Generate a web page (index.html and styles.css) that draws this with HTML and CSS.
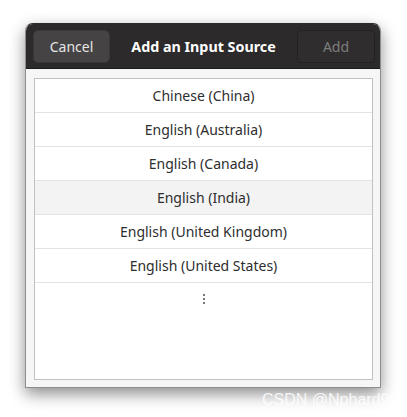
FILE: index.html
```html
<!DOCTYPE html>
<html>
<head>
<meta charset="utf-8">
<link rel="stylesheet" href="styles.css">
</head>
<body>
<div class="stage">
  <div class="dialog">
    <div class="header">
      <button class="btn btn-cancel">Cancel</button>
      <div class="title">Add an Input Source</div>
      <button class="btn btn-add">Add</button>
    </div>
    <div class="content">
      <div class="list">
        <div class="row">Chinese (China)</div>
        <div class="row">English (Australia)</div>
        <div class="row">English (Canada)</div>
        <div class="row row-hover">English (India)</div>
        <div class="row">English (United Kingdom)</div>
        <div class="row">English (United States)</div>
        <div class="row row-more">
          <svg width="4" height="12" viewBox="0 0 4 12" aria-hidden="true">
            <rect x="1" y="0" width="2" height="2" fill="#7a7a7a"/>
            <rect x="1" y="4" width="2" height="2" fill="#7a7a7a"/>
            <rect x="1" y="8" width="2" height="2" fill="#7a7a7a"/>
          </svg>
        </div>
      </div>
    </div>
  </div>
  <div class="watermark">CSDN @Nphard999</div>
</div>
</body>
</html>
```

FILE: styles.css
```css
html, body {
  margin: 0;
  padding: 0;
  background: #ffffff;
}
body {
  font-family: "Noto Sans", "DejaVu Sans", sans-serif;
  width: 407px;
  height: 417px;
  overflow: hidden;
}
.stage {
  position: relative;
  padding: 23px 0 0 25px;
}
.dialog {
  width: 354px;
  height: 363px;
  border: 1px solid #8e8e8e;
  border-top-color: #2c2a2b;
  border-radius: 8px 8px 0 0;
  background: #f6f6f6;
  box-shadow: 0 6px 16px rgba(0,0,0,0.45);
  display: flex;
  flex-direction: column;
  overflow: hidden;
}
.header {
  height: 44px;
  flex: none;
  background: #2c2a2b;
  border-bottom: 1px solid #1c1b1c;
  display: flex;
  align-items: center;
  justify-content: space-between;
  padding: 0 5px 0 7px;
}
.btn {
  font-family: "Noto Sans", "DejaVu Sans", sans-serif;
  font-size: 14px;
  height: 33px;
  width: 77px;
  border-radius: 5px;
  padding: 0;
  margin-top: 1px;
}
.btn-cancel {
  background: #454344;
  border: 1px solid #3a3839;
  color: #e6e6e6;
}
.btn-add {
  background: #2f2d2e;
  border: 1px solid #232223;
  color: #7d7d7d;
  width: 78px;
}
.title {
  color: #ffffff;
  font-weight: bold;
  font-size: 14.3px;
  margin-top: 1px;
}
.content {
  flex: 1;
  padding: 9px 7px 7px 8px;
  display: flex;
}
.list {
  flex: 1;
  background: #ffffff;
  border: 1px solid #c1c1c1;
}
.row {
  height: 33px;
  border-bottom: 1px solid #e3e3e3;
  display: flex;
  align-items: center;
  justify-content: center;
  font-size: 14px;
  color: #2e2e2e;
}
.row-hover {
  background: #f3f3f3;
}
.row-more {
  border-bottom: none;
  height: 34px;
  align-items: flex-start;
  padding-top: 11px;
  box-sizing: border-box;
}
.watermark {
  position: absolute;
  left: 262px;
  top: 391px;
  font-family: "Liberation Sans", Arial, sans-serif;
  font-size: 16px;
  color: rgba(255,255,255,0.85);
  white-space: nowrap;
}
```
